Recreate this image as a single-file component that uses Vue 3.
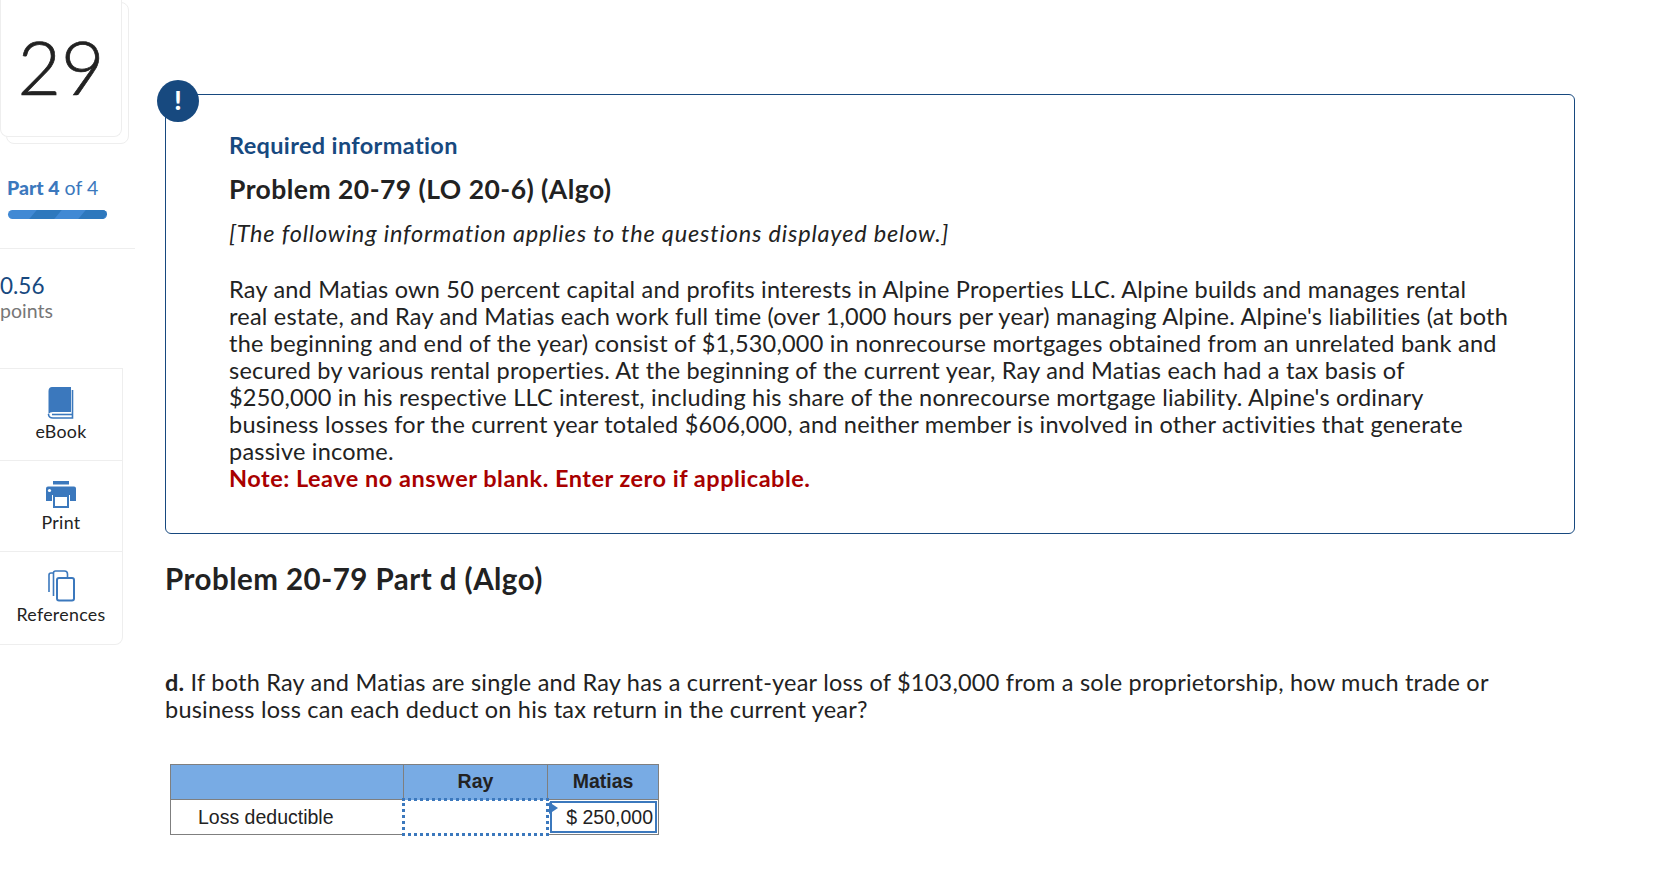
<script setup>
const lines = [
  "Ray and Matias own 50 percent capital and profits interests in Alpine Properties LLC. Alpine builds and manages rental",
  "real estate, and Ray and Matias each work full time (over 1,000 hours per year) managing Alpine. Alpine's liabilities (at both",
  "the beginning and end of the year) consist of $1,530,000 in nonrecourse mortgages obtained from an unrelated bank and",
  "secured by various rental properties. At the beginning of the current year, Ray and Matias each had a tax basis of",
  "$250,000 in his respective LLC interest, including his share of the nonrecourse mortgage liability. Alpine's ordinary",
  "business losses for the current year totaled $606,000, and neither member is involved in other activities that generate",
  "passive income.",
];
</script>

<template>
  <div class="page">
    <aside class="side">
      <div class="num-card"><span>29</span></div>
      <div class="part">
        <p class="part-label"><b>Part 4</b> of 4</p>
        <div class="part-bar">
          <i></i><i></i><i></i><i></i>
        </div>
      </div>
      <div class="points">
        <p class="pts-val">0.56</p>
        <p class="pts-label">points</p>
      </div>
      <div class="tools">
        <div class="tool">
          <svg width="28" height="32" viewBox="0 0 28 32">
            <path d="M5 0h19v25H6c-2 0-3.500 .8-4.500 2.200V4c0-2.500 1.500-4 3.500-4z" fill="#3b78bd" />
            <path d="M25.500 3v28H6c-3 0-4.500-1.500-4.500-4" fill="none" stroke="#3b78bd" stroke-width="1.600" />
            <path d="M5 27.500h20" stroke="#3b78bd" stroke-width="1.600" />
          </svg>
          <span>eBook</span>
        </div>
        <div class="tool print">
          <svg width="32" height="27" viewBox="0 0 32 27">
            <rect x="8" y="0" width="16" height="3.500" fill="#3b78bd" />
            <path d="M3 5.500h26a2 2 0 0 1 2 2v12.500h-6v-6H7v6H1V7.500a2 2 0 0 1 2-2z" fill="#3b78bd" />
            <circle cx="4.500" cy="9.500" r="1.600" fill="#fff" />
            <rect x="9" y="15" width="14" height="11" fill="#fff" stroke="#3b78bd" stroke-width="2" />
          </svg>
          <span>Print</span>
        </div>
        <div class="tool">
          <svg width="28" height="32" viewBox="0 0 28 32">
            <path d="M6.500 26V3a2 2 0 0 1 2-2h9a3 3 0 0 1 3 3v3" fill="none" stroke="#3b78bd" stroke-width="1.600" />
            <path d="M2 22V5a2 2 0 0 1 2-2h2" fill="none" stroke="#3b78bd" stroke-width="1.600" />
            <rect x="10" y="8" width="17" height="22.500" rx="2" fill="#fff" stroke="#3b78bd" stroke-width="2" />
          </svg>
          <span>References</span>
        </div>
      </div>
    </aside>

    <main class="main">
      <section class="info">
        <div class="alert">!</div>
        <h4 class="req">Required information</h4>
        <h3 class="prob">Problem 20-79 (LO 20-6) (Algo)</h3>
        <p class="lead">[The following information applies to the questions displayed below.]</p>
        <p class="body">
          <template v-for="l in lines" :key="l">{{ l }}<br /></template>
          <strong>Note: Leave no answer blank. Enter zero if applicable.</strong>
        </p>
      </section>

      <h2 class="part-title">Problem 20-79 Part d (Algo)</h2>

      <p class="question">
        <b>d.</b> If both Ray and Matias are single and Ray has a current-year loss of $103,000 from a sole proprietorship, how much trade or<br />
        business loss can each deduct on his tax return in the current year?
      </p>

      <table class="grid">
        <colgroup>
          <col class="c1" />
          <col class="c2" />
          <col class="c3" />
        </colgroup>
        <thead>
          <tr>
            <th></th>
            <th>Ray</th>
            <th>Matias</th>
          </tr>
        </thead>
        <tbody>
          <tr>
            <td class="label">Loss deductible</td>
            <td class="blank"></td>
            <td class="amount">
              <div class="amount-box"><span class="flag"></span>$ 250,000</div>
            </td>
          </tr>
        </tbody>
      </table>
    </main>
  </div>
</template>

<style>
html,
body {
  background: #fff;
}
</style>

<style scoped>
.page {
  display: flex;
  width: 1654px;
  height: 889px;
  overflow: hidden;
  font-family: Lato, "Open Sans", sans-serif;
  color: #222;
}

p,
h2,
h3,
h4 {
  margin: 0;
}

.side {
  width: 165px;
  flex: none;
  isolation: isolate;
}

.num-card {
  position: relative;
  width: 122px;
  height: 137px;
  background: #fff;
  border: 1px solid #eee;
  border-top: 0;
  border-radius: 0 0 8px 8px;
  display: flex;
  justify-content: center;
  padding-top: 31px;
  box-sizing: border-box;
  font-size: 75px;
  font-weight: 300;
  -webkit-text-stroke: 0.700px #222;
  line-height: 70px;
  color: #222;
}

.num-card::after {
  content: "";
  position: absolute;
  z-index: -1;
  left: 5px;
  top: 2px;
  width: 123px;
  height: 142px;
  border: 1px solid #eee;
  border-radius: 8px;
  box-sizing: border-box;
}

.part {
  width: 135px;
  height: 73px;
  margin-top: 39px;
  padding-left: 7px;
  border-bottom: 1px solid #eee;
  box-sizing: border-box;
}

.part-label {
  font-size: 19.500px;
  line-height: 24px;
  color: #3b78bd;
}

.part-label b {
  font-weight: 900;
}

.part-bar {
  display: flex;
  width: 99px;
  height: 9px;
  margin: 10px 0 0 1px;
  border-radius: 5px;
  overflow: hidden;
  background: #4189d4;
}

.part-bar i {
  flex: 1;
  transform: skewX(-40deg);
}

.part-bar i:nth-child(even) {
  background: #2e78bd;
}

.points {
  margin-top: 23px;
}

.pts-val {
  font-size: 22.500px;
  line-height: 27px;
  color: #17497f;
}

.pts-label {
  font-size: 19.500px;
  line-height: 24px;
  color: #777;
}

.tools {
  width: 123px;
  margin-top: 45px;
  border: 1px solid #eee;
  border-left: 0;
  border-radius: 0 0 8px 0;
  box-sizing: border-box;
}

.tool {
  height: 91.500px;
  border-bottom: 1px solid #eee;
  display: flex;
  flex-direction: column;
  align-items: center;
  padding-top: 18px;
  box-sizing: border-box;
  font-size: 17.800px;
  letter-spacing: 0.300px;
  line-height: 22px;
}

.tool:last-child {
  border-bottom: 0;
}

.tool svg {
  margin-bottom: 1px;
}

.tool.print {
  padding-top: 20px;
}

.tool.print svg {
  margin-bottom: 3px;
}

.main {
  width: 1410px;
  padding-top: 94px;
}

.info {
  position: relative;
  height: 440px;
  padding: 35px 0 0 63px;
  border: 1px solid #17497f;
  border-radius: 6px;
  box-sizing: border-box;
}

.alert {
  position: absolute;
  left: -9px;
  top: -15px;
  width: 42px;
  height: 42px;
  border-radius: 50%;
  background: #17497f;
  color: #fff;
  font-size: 26px;
  font-weight: 900;
  line-height: 40px;
  text-align: center;
}

.req {
  font-size: 23.500px;
  letter-spacing: 0.350px;
  line-height: 30px;
  font-weight: 700;
  color: #17497f;
}

.prob {
  margin-top: 13px;
  font-size: 26.500px;
  letter-spacing: 0.460px;
  line-height: 32px;
  font-weight: 700;
  color: #222;
}

.lead {
  margin-top: 12px;
  font-size: 23.500px;
  letter-spacing: 0.820px;
  line-height: 32px;
  font-style: italic;
}

.body {
  margin-top: 27px;
  font-size: 23.500px;
  letter-spacing: 0.220px;
  line-height: 27px;
  white-space: nowrap;
}

.body strong {
  letter-spacing: 0.500px;
  color: #a80000;
}

.part-title {
  margin-top: 27px;
  font-size: 29.500px;
  letter-spacing: 0.470px;
  line-height: 36px;
  font-weight: 700;
}

.question {
  margin-top: 72px;
  font-size: 23.500px;
  letter-spacing: 0.220px;
  line-height: 27px;
  white-space: nowrap;
}

.grid {
  margin: 41px 0 0 5px;
  border-collapse: collapse;
  table-layout: fixed;
  width: 488px;
  font-family: "Liberation Sans", Arial, sans-serif;
  font-size: 19.500px;
  line-height: 22px;
  color: #222;
}

.c1 {
  width: 233px;
}

.c2 {
  width: 144px;
}

.c3 {
  width: 111px;
}

.grid th,
.grid td {
  border: 1px solid #7f7f7f;
  padding: 0;
}

.grid th {
  height: 31px;
  padding-bottom: 2px;
  background: #78abe4;
  font-weight: 700;
  text-align: center;
}

.grid td {
  height: 30px;
}

.grid .label {
  padding-left: 27px;
}

.grid .blank {
  border: 3px dotted #3b78bd;
}

.grid .amount {
  padding: 1px;
}

.amount-box {
  position: relative;
  height: 32px;
  border: 2px solid #3b78bd;
  box-sizing: border-box;
  padding-right: 2px;
  line-height: 28px;
  text-align: right;
}

.flag {
  position: absolute;
  left: -3px;
  top: -1px;
  border-left: 9px solid #3b78bd;
  border-top: 6px solid transparent;
  border-bottom: 6px solid transparent;
}
</style>
